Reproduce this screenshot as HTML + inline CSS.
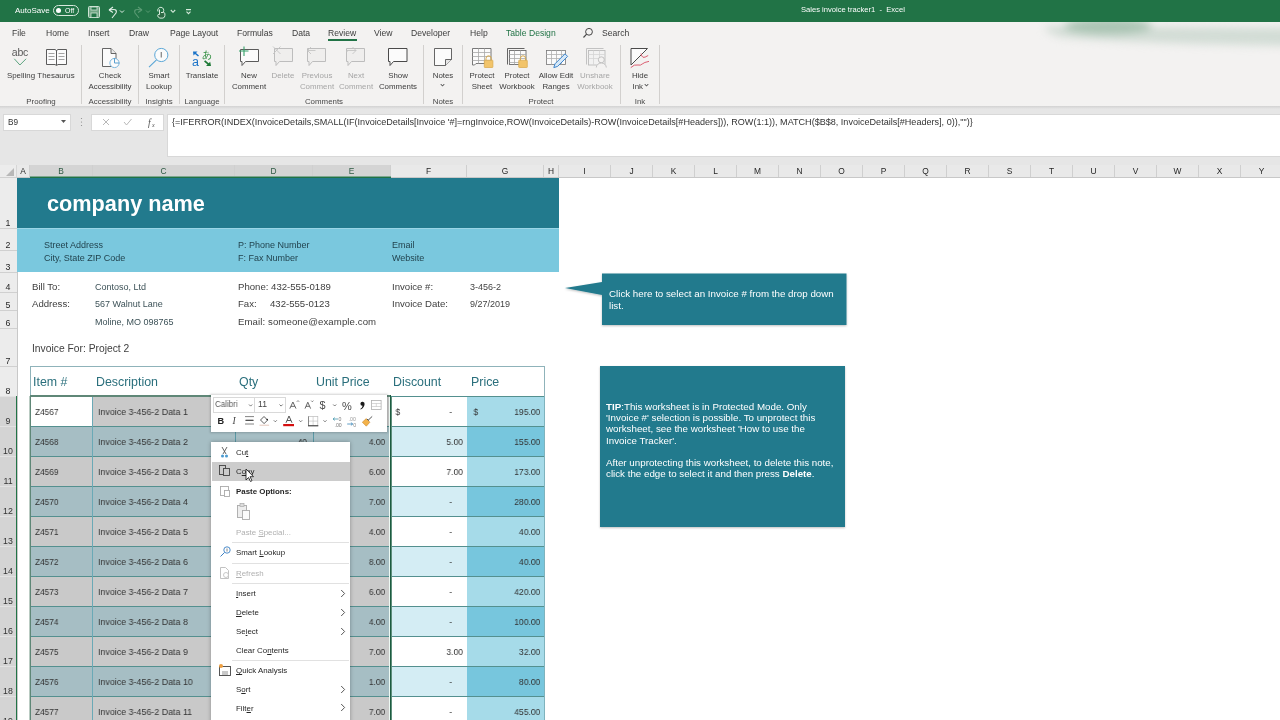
<!DOCTYPE html><html><head><meta charset="utf-8"><style>
*{margin:0;padding:0;box-sizing:border-box}
html,body{width:1280px;height:720px;overflow:hidden;background:#fff;font-family:"Liberation Sans",sans-serif}
body>*{will-change:transform}
.a{position:absolute;white-space:nowrap}
.tab{position:absolute;top:27px;font-size:8.6px;color:#3c3c3c;line-height:12px;white-space:nowrap}
.lbl{position:absolute;font-size:7.9px;color:#3c3c3c;line-height:10.8px;text-align:center;white-space:nowrap}
.dis{color:#a6a6a6}
.grp{position:absolute;top:96px;font-size:7.9px;color:#484848;line-height:11px;text-align:center;white-space:nowrap}
.sep{position:absolute;top:45px;width:1px;height:59px;background:#d2d0ce}
.ch{position:absolute;top:165px;height:12px;background:#e9e9e9;border-right:1px solid #cfcfcf;font-size:8.4px;color:#262626;text-align:center;line-height:13px}
.ch.sel{background:#d4d4d4;color:#2e5a44}
.rh{position:absolute;left:0;width:17px;background:#ececec;border-top:1px solid #d0d0d0;font-size:8.8px;color:#262626;text-align:center}
.rh span{position:absolute;bottom:-1px;left:0;width:16px;line-height:12px}
.rh.sel{background:#d4d4d4;color:#333;border-top-color:#e2e2e2}
.cal{position:absolute;font-size:9px;color:#3d5258;line-height:12px;white-space:nowrap}
.ari{position:absolute;font-size:9.6px;color:#404040;line-height:12px;white-space:nowrap}
.num{position:absolute;font-size:9.5px;color:#333;line-height:12px;text-align:right;white-space:nowrap;transform:scaleX(0.9);transform-origin:100% 50%}
.mi{position:absolute;left:236px;font-size:7.9px;color:#262626;line-height:11px;white-space:nowrap}
.msep{position:absolute;left:232px;width:117px;height:1px;background:#e1e1e1}
.chev{position:absolute;left:340px;width:4px;height:4px;border-right:1px solid #555;border-top:1px solid #555;transform:rotate(45deg)}
</style></head><body>
<div class="a" style="left:0px;top:0px;width:1280px;height:22px;background:#217346"></div>
<div class="a" style="left:15px;top:5px;font-size:8px;color:#fff;line-height:12px">AutoSave</div>
<div class="a" style="left:53px;top:5px;width:26px;height:11px;border:1px solid #d9e8dd;border-radius:6px"></div>
<div class="a" style="left:56px;top:8px;width:5px;height:5px;background:#fff;border-radius:50%"></div>
<div class="a" style="left:65px;top:5px;font-size:7px;color:#fff;line-height:11px">Off</div>
<div class="a" style="left:801px;top:4px;font-size:7.6px;color:#fff;line-height:12px">Sales invoice tracker1&nbsp; - &nbsp;Excel</div>
<svg class="a" style="left:86px;top:3.8px" width="110" height="16" viewBox="0 0 110 16">
<rect x="2.5" y="2.5" width="11" height="11" rx="1" fill="#6fa584" stroke="#cfe3d6" stroke-width="1"/>
<rect x="5" y="3" width="6" height="3" fill="#217346" stroke="#cfe3d6" stroke-width="0.8"/>
<rect x="5" y="9" width="6" height="4.5" fill="#217346" stroke="#cfe3d6" stroke-width="0.8"/>
<path d="M23 6 L27 3 M23 6 L27 8.5 M23 6 Q32 4 30 9 L26 14" fill="none" stroke="#e3efe7" stroke-width="1.1"/>
<path d="M34 6.5 l2 2 l2 -2" fill="none" stroke="#e3efe7" stroke-width="1"/>
<path d="M56 6 L52 3 M56 6 L52 8.5 M56 6 Q47 4 49 9 L53 14" fill="none" stroke="#5a9a73" stroke-width="1.1"/>
<path d="M60 6.5 l2 2 l2 -2" fill="none" stroke="#5a9a73" stroke-width="1"/>
<path d="M72 7.5 a3 3 0 1 1 5.2 0.5" fill="none" stroke="#d5eadb" stroke-width="1"/>
<path d="M73.5 5.5 v5 q-1.8 -0.6 -1.8 1.2 q0 1.6 2.2 2.4 h3 q2 -0.5 2 -2.5 v-1.8 q0 -1.3 -1.5 -1.3 h-2.4" fill="#2d6a45" stroke="#d5eadb" stroke-width="1"/>
<path d="M84.8 6 l2.2 2.3 l2.2 -2.3" fill="none" stroke="#d5eadb" stroke-width="1.1"/>
<path d="M100 5.6 h5 M100.5 7.6 l2 2 l2 -2" fill="none" stroke="#d5eadb" stroke-width="1.1"/>
</svg>
<div class="a" style="left:0px;top:22px;width:1280px;height:85px;background:#f3f2f1"></div>
<div class="a" style="left:1000px;top:22px;width:280px;height:40px;overflow:hidden"><svg style="position:absolute;left:0;top:-10px;filter:blur(4.5px)" width="300" height="60"><path d="M45 14 L300 16 L300 34 L200 32 Q120 30 62 25 Q45 21 45 14 Z" fill="#d2dcd5"/><ellipse cx="108" cy="14" rx="44" ry="8" fill="#aac4b3"/></svg></div>
<div class="tab" style="left:11.5px;top:27px;">File</div>
<div class="tab" style="left:46px;top:27px;">Home</div>
<div class="tab" style="left:88px;top:27px;">Insert</div>
<div class="tab" style="left:129px;top:27px;">Draw</div>
<div class="tab" style="left:169.5px;top:27px;">Page Layout</div>
<div class="tab" style="left:236.5px;top:27px;">Formulas</div>
<div class="tab" style="left:291.5px;top:27px;">Data</div>
<div class="tab" style="left:328px;top:27px;">Review</div>
<div class="tab" style="left:374px;top:27px;">View</div>
<div class="tab" style="left:411px;top:27px;">Developer</div>
<div class="tab" style="left:469.5px;top:27px;">Help</div>
<div class="tab" style="left:506px;top:27px;color:#217346">Table Design</div>
<div class="tab" style="left:601.5px;top:27px;">Search</div>
<div class="a" style="left:328px;top:39px;width:29px;height:2px;background:#217346"></div>
<svg class="a" style="left:582px;top:27px" width="12" height="12"><circle cx="7" cy="4.8" r="3.4" fill="none" stroke="#444" stroke-width="1"/><path d="M4.6 7.2 L1.5 10.5" stroke="#444" stroke-width="1.1"/></svg>
<div class="lbl" style="left:-9.5px;width:60px;top:70.6px">Spelling</div>
<div class="lbl" style="left:26.0px;width:60px;top:70.6px">Thesaurus</div>
<div class="grp" style="left:10.5px;width:60px;top:96px">Proofing</div>
<div class="sep" style="left:81px"></div>
<div class="lbl" style="left:80.0px;width:60px;top:70.6px">Check<br>Accessibility</div>
<div class="grp" style="left:80.0px;width:60px;top:96px">Accessibility</div>
<div class="sep" style="left:138px"></div>
<div class="lbl" style="left:128.5px;width:60px;top:70.6px">Smart<br>Lookup</div>
<div class="grp" style="left:128.5px;width:60px;top:96px">Insights</div>
<div class="sep" style="left:179px"></div>
<div class="lbl" style="left:171.5px;width:60px;top:70.6px">Translate</div>
<div class="grp" style="left:171.5px;width:60px;top:96px">Language</div>
<div class="sep" style="left:224px"></div>
<div class="lbl" style="left:219.0px;width:60px;top:70.6px">New<br>Comment</div>
<div class="lbl dis" style="left:253.0px;width:60px;top:70.6px">Delete</div>
<div class="lbl dis" style="left:287.0px;width:60px;top:70.6px">Previous<br>Comment</div>
<div class="lbl dis" style="left:326.0px;width:60px;top:70.6px">Next<br>Comment</div>
<div class="lbl" style="left:367.5px;width:60px;top:70.6px">Show<br>Comments</div>
<div class="grp" style="left:294.0px;width:60px;top:96px">Comments</div>
<div class="sep" style="left:423px"></div>
<div class="lbl" style="left:413.0px;width:60px;top:70.6px">Notes</div>
<div class="grp" style="left:412.5px;width:60px;top:96px">Notes</div>
<div class="a" style="left:441px;top:83px;width:3px;height:3px;border-right:1px solid #555;border-bottom:1px solid #555;transform:rotate(45deg)"></div>
<div class="sep" style="left:462px"></div>
<div class="lbl" style="left:452.0px;width:60px;top:70.6px">Protect<br>Sheet</div>
<div class="lbl" style="left:486.5px;width:60px;top:70.6px">Protect<br>Workbook</div>
<div class="lbl" style="left:525.5px;width:60px;top:70.6px">Allow Edit<br>Ranges</div>
<div class="lbl dis" style="left:565.0px;width:60px;top:70.6px">Unshare<br>Workbook</div>
<div class="grp" style="left:511.0px;width:60px;top:96px">Protect</div>
<div class="sep" style="left:620px"></div>
<div class="lbl" style="left:609.5px;width:60px;top:70.6px">Hide<br>Ink&nbsp;&nbsp;</div>
<div class="grp" style="left:609.5px;width:60px;top:96px">Ink</div>
<div class="a" style="left:645px;top:83px;width:3px;height:3px;border-right:1px solid #555;border-bottom:1px solid #555;transform:rotate(45deg)"></div>
<div class="sep" style="left:659px"></div>
<svg class="a" style="left:0;top:40px" width="680" height="32" viewBox="0 40 680 32">
<!-- spelling -->
<text x="11.8" y="56" font-family="Liberation Sans" font-size="10.5" fill="#5a5a5a" textLength="16.4">abc</text>
<path d="M14.3 58.8 l5.6 6.2 l6.2 -6.2" fill="none" stroke="#4a9a72" stroke-width="0.9"/>
<!-- thesaurus -->
<path d="M46.5 49.5 h8.5 l1.5 1 l1.5 -1 h8.5 v15 h-8.5 l-1.5 1 l-1.5 -1 h-8.5 z" fill="#fbfbfb" stroke="#4a4a4a" stroke-width="0.9"/>
<path d="M56.5 50.5 v14.5" stroke="#4a4a4a" stroke-width="0.9"/>
<path d="M48.5 53.5 h6 M48.5 56.5 h6 M48.5 59.5 h6 M58.5 53.5 h6 M58.5 56.5 h6 M58.5 59.5 h6" stroke="#9a9a9a" stroke-width="0.9"/>
<!-- check accessibility -->
<path d="M102.5 48.5 h8.5 l5 5 v13 h-13.5 z" fill="#fbfbfb" stroke="#555" stroke-width="0.9"/>
<path d="M111 48.5 v5 h5" fill="#e8e8e8" stroke="#555" stroke-width="0.9"/>
<circle cx="114.5" cy="63" r="4.6" fill="#fbfbfb" stroke="#7bb6dc" stroke-width="1"/>
<path d="M114.5 58 v5 h5" fill="none" stroke="#5aa0d0" stroke-width="1"/>
<!-- smart lookup -->
<circle cx="161.3" cy="55" r="6.6" fill="#fbfbfb" stroke="#5aa6d6" stroke-width="1"/>
<path d="M156.5 59.8 L149 67.2" stroke="#5aa6d6" stroke-width="1.1"/>
<path d="M161.3 52 v5.5" stroke="#8a8a8a" stroke-width="1.3"/>
<!-- translate -->
<path d="M193 51.5 h4.5 l-1.5 1.5 l3 2.5 l-1 1 l-3 -2.5 l-1.5 1.5 z" fill="#1a73c8"/>
<text x="192" y="66.3" font-family="Liberation Sans" font-size="12.5" fill="#1a73c8">a</text>
<text x="201.5" y="57.5" font-family="Liberation Sans" font-size="10" fill="#2a8a3a">&#12354;</text>
<path d="M211 66 h-5 l1.5 -1.5 l-3.5 -3 l1.2 -1.2 l3.5 3 l1.5 -1.5 z" fill="#1f7a38"/>
<!-- new comment -->
<path d="M240.5 49.5 h18 v12 h-13 l-3.5 4 v-4 h-1.5 z" fill="#fbfbfb" stroke="#5a5a5a" stroke-width="1"/>
<path d="M244 46.5 v9.5 M239 51 h9.5" stroke="#35a26a" stroke-width="1.1"/>
<!-- delete comment -->
<path d="M274.5 48.5 h18 v13 h-13 l-3.5 4 v-4 h-1.5 z" fill="#efeeed" stroke="#bdbdbd" stroke-width="1"/>
<path d="M273 46.5 l7.5 7.5 M280.5 46.5 l-7.5 7.5" stroke="#c4c4c4" stroke-width="0.9"/>
<!-- previous -->
<path d="M307.5 48.5 h18 v13 h-13 l-3.5 4 v-4 h-1.5 z" fill="#efeeed" stroke="#bdbdbd" stroke-width="1"/>
<path d="M311 47 l-3.5 3.5 l3.5 3.5 M307.5 50.5 h8" fill="none" stroke="#c4c4c4" stroke-width="0.9"/>
<!-- next -->
<path d="M346.5 48.5 h18 v13 h-13 l-3.5 4 v-4 h-1.5 z" fill="#efeeed" stroke="#bdbdbd" stroke-width="1"/>
<path d="M352.5 47 l3.5 3.5 l-3.5 3.5 M347 52 v-1.5 h9" fill="none" stroke="#c4c4c4" stroke-width="0.9"/>
<!-- show comments -->
<path d="M388.5 48.5 h18.5 v13 h-13.5 l-3.5 4 v-4 h-1.5 z" fill="#fbfbfb" stroke="#4a4a4a" stroke-width="1"/>
<!-- notes -->
<path d="M434.5 48.5 h17 v11 l-6 6 h-11 z" fill="#fbfbfb" stroke="#555" stroke-width="0.9"/>
<path d="M451.5 59.5 h-6 v6" fill="#e6e6e6" stroke="#555" stroke-width="0.9"/>
<!-- protect sheet -->
<path d="M472.5 48.5 h18.5 v15 h-15 l-1.5 1.5 h-2 z" fill="#fbfbfb" stroke="#6a6a6a" stroke-width="0.9"/>
<path d="M472.5 52.5 h18.5 M472.5 56.5 h18.5 M472.5 60.5 h18.5 M478.5 48.5 v15 M484.5 48.5 v15" stroke="#a8a8a8" stroke-width="0.8"/>
<rect x="484.3" y="60.2" width="8.6" height="7.3" rx="0.6" fill="#f2c46a" stroke="#d8a848" stroke-width="0.7"/>
<path d="M486 60.2 v-1.8 a2.6 2.6 0 0 1 5.2 0 v1.8" fill="none" stroke="#d8a848" stroke-width="1"/>
<!-- protect workbook -->
<path d="M507.5 64.5 v-16 h17" fill="none" stroke="#555" stroke-width="0.9"/>
<rect x="509.5" y="50.5" width="16.5" height="14" fill="#fbfbfb" stroke="#6a6a6a" stroke-width="0.9"/>
<path d="M509.5 54.5 h16.5 M509.5 58.5 h16.5 M509.5 62.5 h16.5 M514.5 50.5 v14 M520.5 50.5 v14" stroke="#a8a8a8" stroke-width="0.8"/>
<rect x="518.7" y="60.2" width="8.6" height="7.3" rx="0.6" fill="#f2c46a" stroke="#d8a848" stroke-width="0.7"/>
<path d="M520.4 60.2 v-1.8 a2.6 2.6 0 0 1 5.2 0 v1.8" fill="none" stroke="#d8a848" stroke-width="1"/>
<!-- allow edit ranges -->
<rect x="546.5" y="50.5" width="19" height="14" fill="#fbfbfb" stroke="#777" stroke-width="0.8"/>
<path d="M546.5 54.5 h19 M546.5 58.5 h19 M551.5 50.5 v14 M556.5 50.5 v14 M561.5 50.5 v14" stroke="#b0b0b0" stroke-width="0.8"/>
<path d="M553.8 67.6 l1.2 -3.8 l10 -10 l2.6 2.6 l-10 10 z" fill="#d6e8f7" stroke="#3b84cc" stroke-width="1"/>
<!-- unshare workbook -->
<path d="M586.5 64.5 v-16 h17" fill="none" stroke="#bcbcbc" stroke-width="0.9"/>
<rect x="588.5" y="50.5" width="16.5" height="14.5" fill="#f2f2f2" stroke="#bcbcbc" stroke-width="0.9"/>
<path d="M588.5 54.5 h16.5 M588.5 58.5 h16.5 M593.5 50.5 v14.5 M599.5 50.5 v14.5" stroke="#d4d4d4" stroke-width="0.8"/>
<circle cx="601.3" cy="59.8" r="3" fill="#f3f2f1" stroke="#bcbcbc" stroke-width="0.9"/>
<path d="M596.3 67.5 a5 4.5 0 0 1 10 0" fill="#f3f2f1" stroke="#bcbcbc" stroke-width="0.9"/>
<!-- hide ink -->
<path d="M631 48.5 h16.5 l-16.5 16.5 z" fill="#fbfbfb" stroke="#4a4a4a" stroke-width="1"/>
<path d="M641 53.5 q0.5 3 2 3.8 q1.5 0.6 5.2 -1.8 M630.8 67.6 q3.5 -3.6 7.2 -2.6 q2.6 0.7 4.2 -1 q2 -1.8 6.8 -2.6" fill="none" stroke="#d9566a" stroke-width="0.95"/>
</svg>
<div class="a" style="left:0px;top:107px;width:1280px;height:58px;background:#e6e6e6"></div>
<div class="a" style="left:0px;top:106px;width:1280px;height:3px;background:linear-gradient(#d2d2d2,#e6e6e6)"></div>
<div class="a" style="left:3px;top:114px;width:68px;height:17px;background:#fff;border:1px solid #d8d8d8"></div>
<div class="a" style="left:8px;top:117.3px;font-size:8.2px;color:#333;line-height:11px">B9</div>
<svg class="a" style="left:61px;top:120px" width="6" height="4"><path d="M0 0 h5 l-2.5 3 z" fill="#555"/></svg>
<svg class="a" style="left:80px;top:117px" width="3" height="12"><circle cx="1.5" cy="1.5" r="0.6" fill="#888"/><circle cx="1.5" cy="5" r="0.6" fill="#888"/><circle cx="1.5" cy="8.5" r="0.6" fill="#888"/></svg>
<div class="a" style="left:91px;top:114px;width:73px;height:17px;background:#fff;border:1px solid #d8d8d8"></div>
<svg class="a" style="left:95px;top:116px" width="68" height="14">
<path d="M8 3 l6 6 M14 3 l-6 6" stroke="#b8b8b8" stroke-width="1"/>
<path d="M29 6 l2.5 3 l5 -6" fill="none" stroke="#b8b8b8" stroke-width="1"/>
<text x="53" y="10" font-family="Liberation Serif" font-style="italic" font-size="9.5" fill="#555">f</text><text x="57" y="11" font-family="Liberation Serif" font-style="italic" font-size="6" fill="#555">x</text>
</svg>
<div class="a" style="left:167px;top:114px;width:1113px;height:43px;background:#fff;border:1px solid #d8d8d8;border-right:none"></div>
<div class="a" style="left:172px;top:116.5px;font-size:9.07px;color:#333;line-height:11px">{=IFERROR(INDEX(InvoiceDetails,SMALL(IF(InvoiceDetails[Invoice '#]=rngInvoice,ROW(InvoiceDetails)-ROW(InvoiceDetails[#Headers])), ROW(1:1)), MATCH($B$8, InvoiceDetails[#Headers], 0)),"")}</div>
<div class="a" style="left:0px;top:165px;width:17px;height:12px;background:#ececec;border-right:1px solid #d6d6d6"></div>
<svg class="a" style="left:5px;top:167px" width="10" height="10"><path d="M9 1 V9 H1 z" fill="#b8b8b8"/></svg>
<div class="ch" style="left:17px;width:13px">A</div>
<div class="ch sel" style="left:30px;width:63px">B</div>
<div class="ch sel" style="left:93px;width:142px">C</div>
<div class="ch sel" style="left:235px;width:78px">D</div>
<div class="ch sel" style="left:313px;width:78px">E</div>
<div class="ch" style="left:391px;width:76px">F</div>
<div class="ch" style="left:467px;width:77px">G</div>
<div class="ch" style="left:544px;width:15px">H</div>
<div class="ch" style="left:559px;width:52px">I</div>
<div class="ch" style="left:611px;width:42px">J</div>
<div class="ch" style="left:653px;width:42px">K</div>
<div class="ch" style="left:695px;width:42px">L</div>
<div class="ch" style="left:737px;width:42px">M</div>
<div class="ch" style="left:779px;width:42px">N</div>
<div class="ch" style="left:821px;width:42px">O</div>
<div class="ch" style="left:863px;width:42px">P</div>
<div class="ch" style="left:905px;width:42px">Q</div>
<div class="ch" style="left:947px;width:42px">R</div>
<div class="ch" style="left:989px;width:42px">S</div>
<div class="ch" style="left:1031px;width:42px">T</div>
<div class="ch" style="left:1073px;width:42px">U</div>
<div class="ch" style="left:1115px;width:42px">V</div>
<div class="ch" style="left:1157px;width:42px">W</div>
<div class="ch" style="left:1199px;width:42px">X</div>
<div class="ch" style="left:1241px;width:42px">Y</div>
<div class="a" style="left:0px;top:177px;width:1280px;height:1px;background:#c8c8c8"></div>
<div class="a" style="left:30px;top:176px;width:361px;height:1px;background:#7fa891"></div>
<div class="a" style="left:30px;top:177px;width:361px;height:1px;background:#217346"></div>
<div class="rh" style="top:177px;height:51px"><span>1</span></div>
<div class="rh" style="top:228px;height:22px"><span>2</span></div>
<div class="rh" style="top:250px;height:22px"><span>3</span></div>
<div class="rh" style="top:272px;height:20px"><span>4</span></div>
<div class="rh" style="top:292px;height:18px"><span>5</span></div>
<div class="rh" style="top:310px;height:18px"><span>6</span></div>
<div class="rh" style="top:328px;height:38px"><span>7</span></div>
<div class="rh" style="top:366px;height:30px"><span>8</span></div>
<div class="rh sel" style="top:396px;height:30px"><span>9</span></div>
<div class="rh sel" style="top:426px;height:30px"><span>10</span></div>
<div class="rh sel" style="top:456px;height:30px"><span>11</span></div>
<div class="rh sel" style="top:486px;height:30px"><span>12</span></div>
<div class="rh sel" style="top:516px;height:30px"><span>13</span></div>
<div class="rh sel" style="top:546px;height:30px"><span>14</span></div>
<div class="rh sel" style="top:576px;height:30px"><span>15</span></div>
<div class="rh sel" style="top:606px;height:30px"><span>16</span></div>
<div class="rh sel" style="top:636px;height:30px"><span>17</span></div>
<div class="rh sel" style="top:666px;height:30px"><span>18</span></div>
<div class="rh sel" style="top:696px;height:30px"><span>19</span></div>
<div class="a" style="left:17px;top:177px;width:1px;height:543px;background:#c8c8c8"></div>
<div class="a" style="left:16px;top:396px;width:1px;height:324px;background:#217346"></div>
<div class="a" style="left:17px;top:178px;width:542px;height:50px;background:#227a8d"></div>
<div class="a" style="left:17px;top:228px;width:542px;height:1px;background:#9ad6e6"></div>
<div class="a" style="left:17px;top:229px;width:542px;height:43px;background:#7ac8de"></div>
<div class="a" style="left:46.5px;top:191.2px;font-size:21.7px;font-weight:bold;color:#fff;line-height:26px">company name</div>
<div class="cal" style="left:43.7px;top:238.5px;color:#1f3f4a">Street Address</div>
<div class="cal" style="left:43.7px;top:252px;color:#1f3f4a">City, State ZIP Code</div>
<div class="cal" style="left:237.5px;top:238.5px;color:#1f3f4a">P: Phone Number</div>
<div class="cal" style="left:237.5px;top:252px;color:#1f3f4a">F: Fax Number</div>
<div class="cal" style="left:392.2px;top:238.5px;color:#1f3f4a">Email</div>
<div class="cal" style="left:392.2px;top:252px;color:#1f3f4a">Website</div>
<div class="ari" style="left:32.4px;top:281px">Bill To:</div>
<div class="ari" style="left:32.4px;top:298px">Address:</div>
<div class="ari" style="left:237.5px;top:280.5px">Phone: 432-555-0189</div>
<div class="ari" style="left:237.5px;top:298px">Fax:</div>
<div class="ari" style="left:269.8px;top:298px">432-555-0123</div>
<div class="ari" style="left:237.5px;top:315.5px"><span style="letter-spacing:0.1px">Email: someone@example.com</span></div>
<div class="ari" style="left:392.2px;top:281px">Invoice #:</div>
<div class="ari" style="left:392.2px;top:298px">Invoice Date:</div>
<div class="cal" style="left:94.8px;top:281px">Contoso, Ltd</div>
<div class="cal" style="left:94.8px;top:298px">567 Walnut Lane</div>
<div class="cal" style="left:94.8px;top:315.5px">Moline, MO 098765</div>
<div class="cal" style="left:469.5px;top:281px;color:#444">3-456-2</div>
<div class="cal" style="left:469.5px;top:298px;color:#444">9/27/2019</div>
<div class="ari" style="left:32.4px;top:342.5px;font-size:10.3px">Invoice For: Project 2</div>
<div class="a" style="left:30px;top:366px;width:515px;height:31px;border:1px solid #8fb3ba;border-bottom:none;background:#fff"></div>
<div class="a" style="left:33.3px;top:375px;font-size:12.4px;color:#2a6f7c;line-height:15px">Item #</div>
<div class="a" style="left:96.1px;top:375px;font-size:12.4px;color:#2a6f7c;line-height:15px">Description</div>
<div class="a" style="left:239px;top:375px;font-size:12.4px;color:#2a6f7c;line-height:15px">Qty</div>
<div class="a" style="left:315.8px;top:375px;font-size:12.4px;color:#2a6f7c;line-height:15px">Unit Price</div>
<div class="a" style="left:393.4px;top:375px;font-size:12.4px;color:#2a6f7c;line-height:15px">Discount</div>
<div class="a" style="left:470.6px;top:375px;font-size:12.4px;color:#2a6f7c;line-height:15px">Price</div>
<div class="a" style="left:31px;top:396px;width:360px;height:30px;background:#c9c9c9"></div>
<div class="a" style="left:391px;top:396px;width:76px;height:30px;background:#ffffff"></div>
<div class="a" style="left:467px;top:396px;width:78px;height:30px;background:#a6dbe9"></div>
<div class="a" style="left:31px;top:396px;width:62px;height:30px;background:#fff"></div>
<div class="a" style="left:30px;top:396px;width:515px;height:1px;background:#54908f"></div>
<div class="cal" style="left:35.4px;top:405.5px;color:#333;font-size:9.3px;transform:scaleX(0.89);transform-origin:0 50%">Z4567</div>
<div class="cal" style="left:97.5px;top:405.5px;color:#333;font-size:9.3px;transform:scaleX(0.955);transform-origin:0 50%">Invoice 3-456-2 Data 1</div>
<div class="num" style="left:240px;width:67px;top:406px"></div>
<div class="num" style="left:320px;width:65.4px;top:406px">5.00</div>
<div class="num" style="left:395px;top:406px">$</div>
<div class="num" style="left:449px;top:406px">-</div>
<div class="num" style="left:473px;top:406px">$</div>
<div class="num" style="left:480px;width:60.4px;top:406px">195.00</div>
<div class="a" style="left:31px;top:426px;width:360px;height:30px;background:#a6bec4"></div>
<div class="a" style="left:391px;top:426px;width:76px;height:30px;background:#d4edf4"></div>
<div class="a" style="left:467px;top:426px;width:78px;height:30px;background:#77c6dd"></div>
<div class="a" style="left:30px;top:426px;width:515px;height:1px;background:#54908f"></div>
<div class="cal" style="left:35.4px;top:435.5px;color:#333;font-size:9.3px;transform:scaleX(0.89);transform-origin:0 50%">Z4568</div>
<div class="cal" style="left:97.5px;top:435.5px;color:#333;font-size:9.3px;transform:scaleX(0.955);transform-origin:0 50%">Invoice 3-456-2 Data 2</div>
<div class="num" style="left:240px;width:67px;top:436px">40</div>
<div class="num" style="left:320px;width:65.4px;top:436px">4.00</div>
<div class="num" style="left:400px;width:63px;top:436px">5.00</div>
<div class="num" style="left:480px;width:60.4px;top:436px">155.00</div>
<div class="a" style="left:31px;top:456px;width:360px;height:30px;background:#c9c9c9"></div>
<div class="a" style="left:391px;top:456px;width:76px;height:30px;background:#ffffff"></div>
<div class="a" style="left:467px;top:456px;width:78px;height:30px;background:#a6dbe9"></div>
<div class="a" style="left:30px;top:456px;width:515px;height:1px;background:#54908f"></div>
<div class="cal" style="left:35.4px;top:465.5px;color:#333;font-size:9.3px;transform:scaleX(0.89);transform-origin:0 50%">Z4569</div>
<div class="cal" style="left:97.5px;top:465.5px;color:#333;font-size:9.3px;transform:scaleX(0.955);transform-origin:0 50%">Invoice 3-456-2 Data 3</div>
<div class="num" style="left:240px;width:67px;top:466px">30</div>
<div class="num" style="left:320px;width:65.4px;top:466px">6.00</div>
<div class="num" style="left:400px;width:63px;top:466px">7.00</div>
<div class="num" style="left:480px;width:60.4px;top:466px">173.00</div>
<div class="a" style="left:31px;top:486px;width:360px;height:30px;background:#a6bec4"></div>
<div class="a" style="left:391px;top:486px;width:76px;height:30px;background:#d4edf4"></div>
<div class="a" style="left:467px;top:486px;width:78px;height:30px;background:#77c6dd"></div>
<div class="a" style="left:30px;top:486px;width:515px;height:1px;background:#54908f"></div>
<div class="cal" style="left:35.4px;top:495.5px;color:#333;font-size:9.3px;transform:scaleX(0.89);transform-origin:0 50%">Z4570</div>
<div class="cal" style="left:97.5px;top:495.5px;color:#333;font-size:9.3px;transform:scaleX(0.955);transform-origin:0 50%">Invoice 3-456-2 Data 4</div>
<div class="num" style="left:240px;width:67px;top:496px">40</div>
<div class="num" style="left:320px;width:65.4px;top:496px">7.00</div>
<div class="num" style="left:449px;top:496px">-</div>
<div class="num" style="left:480px;width:60.4px;top:496px">280.00</div>
<div class="a" style="left:31px;top:516px;width:360px;height:30px;background:#c9c9c9"></div>
<div class="a" style="left:391px;top:516px;width:76px;height:30px;background:#ffffff"></div>
<div class="a" style="left:467px;top:516px;width:78px;height:30px;background:#a6dbe9"></div>
<div class="a" style="left:30px;top:516px;width:515px;height:1px;background:#54908f"></div>
<div class="cal" style="left:35.4px;top:525.5px;color:#333;font-size:9.3px;transform:scaleX(0.89);transform-origin:0 50%">Z4571</div>
<div class="cal" style="left:97.5px;top:525.5px;color:#333;font-size:9.3px;transform:scaleX(0.955);transform-origin:0 50%">Invoice 3-456-2 Data 5</div>
<div class="num" style="left:240px;width:67px;top:526px">10</div>
<div class="num" style="left:320px;width:65.4px;top:526px">4.00</div>
<div class="num" style="left:449px;top:526px">-</div>
<div class="num" style="left:480px;width:60.4px;top:526px">40.00</div>
<div class="a" style="left:31px;top:546px;width:360px;height:30px;background:#a6bec4"></div>
<div class="a" style="left:391px;top:546px;width:76px;height:30px;background:#d4edf4"></div>
<div class="a" style="left:467px;top:546px;width:78px;height:30px;background:#77c6dd"></div>
<div class="a" style="left:30px;top:546px;width:515px;height:1px;background:#54908f"></div>
<div class="cal" style="left:35.4px;top:555.5px;color:#333;font-size:9.3px;transform:scaleX(0.89);transform-origin:0 50%">Z4572</div>
<div class="cal" style="left:97.5px;top:555.5px;color:#333;font-size:9.3px;transform:scaleX(0.955);transform-origin:0 50%">Invoice 3-456-2 Data 6</div>
<div class="num" style="left:240px;width:67px;top:556px">5</div>
<div class="num" style="left:320px;width:65.4px;top:556px">8.00</div>
<div class="num" style="left:449px;top:556px">-</div>
<div class="num" style="left:480px;width:60.4px;top:556px">40.00</div>
<div class="a" style="left:31px;top:576px;width:360px;height:30px;background:#c9c9c9"></div>
<div class="a" style="left:391px;top:576px;width:76px;height:30px;background:#ffffff"></div>
<div class="a" style="left:467px;top:576px;width:78px;height:30px;background:#a6dbe9"></div>
<div class="a" style="left:30px;top:576px;width:515px;height:1px;background:#54908f"></div>
<div class="cal" style="left:35.4px;top:585.5px;color:#333;font-size:9.3px;transform:scaleX(0.89);transform-origin:0 50%">Z4573</div>
<div class="cal" style="left:97.5px;top:585.5px;color:#333;font-size:9.3px;transform:scaleX(0.955);transform-origin:0 50%">Invoice 3-456-2 Data 7</div>
<div class="num" style="left:240px;width:67px;top:586px">70</div>
<div class="num" style="left:320px;width:65.4px;top:586px">6.00</div>
<div class="num" style="left:449px;top:586px">-</div>
<div class="num" style="left:480px;width:60.4px;top:586px">420.00</div>
<div class="a" style="left:31px;top:606px;width:360px;height:30px;background:#a6bec4"></div>
<div class="a" style="left:391px;top:606px;width:76px;height:30px;background:#d4edf4"></div>
<div class="a" style="left:467px;top:606px;width:78px;height:30px;background:#77c6dd"></div>
<div class="a" style="left:30px;top:606px;width:515px;height:1px;background:#54908f"></div>
<div class="cal" style="left:35.4px;top:615.5px;color:#333;font-size:9.3px;transform:scaleX(0.89);transform-origin:0 50%">Z4574</div>
<div class="cal" style="left:97.5px;top:615.5px;color:#333;font-size:9.3px;transform:scaleX(0.955);transform-origin:0 50%">Invoice 3-456-2 Data 8</div>
<div class="num" style="left:240px;width:67px;top:616px">25</div>
<div class="num" style="left:320px;width:65.4px;top:616px">4.00</div>
<div class="num" style="left:449px;top:616px">-</div>
<div class="num" style="left:480px;width:60.4px;top:616px">100.00</div>
<div class="a" style="left:31px;top:636px;width:360px;height:30px;background:#c9c9c9"></div>
<div class="a" style="left:391px;top:636px;width:76px;height:30px;background:#ffffff"></div>
<div class="a" style="left:467px;top:636px;width:78px;height:30px;background:#a6dbe9"></div>
<div class="a" style="left:30px;top:636px;width:515px;height:1px;background:#54908f"></div>
<div class="cal" style="left:35.4px;top:645.5px;color:#333;font-size:9.3px;transform:scaleX(0.89);transform-origin:0 50%">Z4575</div>
<div class="cal" style="left:97.5px;top:645.5px;color:#333;font-size:9.3px;transform:scaleX(0.955);transform-origin:0 50%">Invoice 3-456-2 Data 9</div>
<div class="num" style="left:240px;width:67px;top:646px">5</div>
<div class="num" style="left:320px;width:65.4px;top:646px">7.00</div>
<div class="num" style="left:400px;width:63px;top:646px">3.00</div>
<div class="num" style="left:480px;width:60.4px;top:646px">32.00</div>
<div class="a" style="left:31px;top:666px;width:360px;height:30px;background:#a6bec4"></div>
<div class="a" style="left:391px;top:666px;width:76px;height:30px;background:#d4edf4"></div>
<div class="a" style="left:467px;top:666px;width:78px;height:30px;background:#77c6dd"></div>
<div class="a" style="left:30px;top:666px;width:515px;height:1px;background:#54908f"></div>
<div class="cal" style="left:35.4px;top:675.5px;color:#333;font-size:9.3px;transform:scaleX(0.89);transform-origin:0 50%">Z4576</div>
<div class="cal" style="left:97.5px;top:675.5px;color:#333;font-size:9.3px;transform:scaleX(0.955);transform-origin:0 50%">Invoice 3-456-2 Data 10</div>
<div class="num" style="left:240px;width:67px;top:676px">80</div>
<div class="num" style="left:320px;width:65.4px;top:676px">1.00</div>
<div class="num" style="left:449px;top:676px">-</div>
<div class="num" style="left:480px;width:60.4px;top:676px">80.00</div>
<div class="a" style="left:31px;top:696px;width:360px;height:30px;background:#c9c9c9"></div>
<div class="a" style="left:391px;top:696px;width:76px;height:30px;background:#ffffff"></div>
<div class="a" style="left:467px;top:696px;width:78px;height:30px;background:#a6dbe9"></div>
<div class="a" style="left:30px;top:696px;width:515px;height:1px;background:#54908f"></div>
<div class="cal" style="left:35.4px;top:705.5px;color:#333;font-size:9.3px;transform:scaleX(0.89);transform-origin:0 50%">Z4577</div>
<div class="cal" style="left:97.5px;top:705.5px;color:#333;font-size:9.3px;transform:scaleX(0.955);transform-origin:0 50%">Invoice 3-456-2 Data 11</div>
<div class="num" style="left:240px;width:67px;top:706px">65</div>
<div class="num" style="left:320px;width:65.4px;top:706px">7.00</div>
<div class="num" style="left:449px;top:706px">-</div>
<div class="num" style="left:480px;width:60.4px;top:706px">455.00</div>
<div class="a" style="left:92px;top:396px;width:1px;height:324px;background:#6aa9b6"></div>
<div class="a" style="left:235px;top:396px;width:1px;height:324px;background:#5b98a4"></div>
<div class="a" style="left:313px;top:396px;width:1px;height:324px;background:#5b98a4"></div>
<div class="a" style="left:544px;top:396px;width:1px;height:324px;background:#7fb3bd"></div>
<div class="a" style="left:30px;top:395px;width:361px;height:2px;background:#5f8777"></div>
<div class="a" style="left:29px;top:396px;width:1px;height:324px;background:#b9cbc2"></div>
<div class="a" style="left:30px;top:396px;width:1px;height:324px;background:#5f8777"></div>
<div class="a" style="left:389px;top:397px;width:1px;height:323px;background:#eefaf4"></div>
<div class="a" style="left:390px;top:395px;width:1px;height:325px;background:#1d5c40"></div>
<div class="a" style="left:391px;top:397px;width:1px;height:323px;background:#5f8f7c"></div>
<svg class="a" style="left:560px;top:270px" width="300" height="62"><defs><filter id="sh" x="-10%" y="-10%" width="120%" height="140%"><feDropShadow dx="0" dy="1" stdDeviation="1" flood-color="#000" flood-opacity="0.25"/></filter></defs><path d="M42 3.5 H286.5 V55 H42 V25 L5 18 L42 12 Z" fill="#227a8d" filter="url(#sh)"/></svg>
<div class="a" style="left:608.5px;top:288px;font-size:9.78px;color:#fff;line-height:11.6px">Click here to select an Invoice # from the drop down<br>list.</div>
<div class="a" style="left:600px;top:365.5px;width:244.5px;height:161px;background:#227a8d;box-shadow:0 1px 2px rgba(0,0,0,0.25)"></div>
<div class="a" style="left:606.25px;top:401px;font-size:9.78px;color:#fff;line-height:11.2px"><b>TIP</b>:This worksheet is in Protected Mode. Only<br>'Invoice #' selection is possible. To unprotect this<br>worksheet, see the worksheet 'How to use the<br>Invoice Tracker'.<br><br>After unprotecting this worksheet, to delete this note,<br>click the edge to select it and then press <b>Delete</b>.</div>
<div class="a" style="left:210.5px;top:395px;width:175.5px;height:36.5px;background:#fff;box-shadow:0 0 2px 1px rgba(0,0,0,0.18)"></div>
<div class="a" style="left:213px;top:397.4px;width:42px;height:16px;border:1px solid #d9d9d9"></div>
<div class="a" style="left:255px;top:397.4px;width:30.7px;height:16px;border:1px solid #d9d9d9;border-left:none"></div>
<div class="a" style="left:214.9px;top:399.3px;font-size:8.6px;color:#5a5a5a;line-height:11px;transform:scaleX(0.93);transform-origin:0 50%">Calibri</div>
<div class="a" style="left:257.6px;top:399.3px;font-size:8.6px;color:#444;line-height:11px">11</div>
<svg class="a" style="left:210px;top:395px" width="176" height="37" viewBox="210 395 176 37">
<path d="M249 404.5 l1.6 1.6 l1.6 -1.6 M279.5 404.5 l1.6 1.6 l1.6 -1.6" fill="none" stroke="#555" stroke-width="0.8"/>
<path d="M289.8 408.6 l3.1 -6.6 l3.1 6.6 M290.9 406.3 h4" fill="none" stroke="#555" stroke-width="0.9"/><path d="M296.8 401.8 l1.2 -1.2 l1.2 1.2" fill="none" stroke="#555" stroke-width="0.7"/>
<path d="M305 408.6 l2.8 -6.4 l2.8 6.4 M306 406.3 h3.6" fill="none" stroke="#555" stroke-width="0.9"/><path d="M311.2 400.6 l1.1 1.2 l1.1 -1.2" fill="none" stroke="#555" stroke-width="0.7"/>
<text x="319.6" y="409" font-family="Liberation Sans" font-size="10.8" fill="#4a4a4a" textLength="5.8">$</text>
<path d="M333.2 404.5 l1.5 1.5 l1.5 -1.5" fill="none" stroke="#555" stroke-width="0.8"/>
<text x="342" y="409.6" font-family="Liberation Sans" font-size="11" fill="#4a4a4a" textLength="10.2">%</text>
<path d="M360.4 403.6 a2.1 2.1 0 1 1 4.2 0.4 q-0.1 3.4 -3.9 5.6 l-0.4 -0.6 q2.2 -1.5 2.3 -3.2 a2.1 2.1 0 0 1 -2.2 -2.2 z" fill="#1a1a1a"/>
<rect x="371.5" y="400.5" width="9.6" height="9" fill="none" stroke="#b0b0b0" stroke-width="0.8"/><path d="M371.5 403.5 h9.6 M371.5 406.5 h9.6 M376.3 403.5 v3" stroke="#c0c0c0" stroke-width="0.6"/>
<text x="217.6" y="424.2" font-family="Liberation Sans" font-weight="bold" font-size="9.2" fill="#222">B</text>
<text x="232.5" y="424.2" font-family="Liberation Serif" font-style="italic" font-size="9.5" fill="#444">I</text>
<path d="M245 416.6 h9 M245 420.3 h9 M245 424 h9" stroke="#777" stroke-width="0.9"/><path d="M246 420.3 h7" stroke="#333" stroke-width="0.9"/>
<path d="M260.5 420 l3.5 -3.5 l3.6 3.6 l-3.5 3.5 z" fill="#fff" stroke="#333" stroke-width="0.8"/><circle cx="267.2" cy="419.6" r="0.8" fill="#222"/>
<rect x="259.5" y="424.6" width="9.6" height="1.4" fill="#ecd8d0"/>
<path d="M273.8 420.3 l1.5 1.5 l1.5 -1.5 M299.2 420.3 l1.5 1.5 l1.5 -1.5 M323.5 420.3 l1.5 1.5 l1.5 -1.5" fill="none" stroke="#555" stroke-width="0.8"/>
<path d="M286 422.8 l3 -6.8 l3 6.8 M287.1 420.5 h3.8" fill="none" stroke="#444" stroke-width="0.9"/><rect x="283.2" y="424" width="10.8" height="2.2" fill="#d40f0f"/>
<rect x="308.5" y="416.5" width="9.3" height="9.3" fill="none" stroke="#bbb" stroke-width="0.7"/><path d="M313.1 416.5 v9.3 M308.5 421.1 h9.3" stroke="#bbb" stroke-width="0.6"/><path d="M308 425.8 h10.3" stroke="#333" stroke-width="1"/><path d="M308.5 416.5 v9.3" stroke="#555" stroke-width="0.6"/>
<path d="M333 419 h5 M333 419 l1.8 -1.4 M333 419 l1.8 1.4" fill="none" stroke="#4a9ab0" stroke-width="0.8"/><text x="338.6" y="421.2" font-family="Liberation Sans" font-size="5.2" fill="#777">0</text><text x="334.5" y="426.6" font-family="Liberation Sans" font-size="5.2" fill="#777">.00</text>
<text x="348.6" y="421.2" font-family="Liberation Sans" font-size="5.2" fill="#999">.00</text><path d="M347.2 424 h5.5 M352.7 424 l-1.8 -1.4 M352.7 424 l-1.8 1.4" fill="none" stroke="#3a86b8" stroke-width="0.8"/><text x="353.2" y="426.6" font-family="Liberation Sans" font-size="5.2" fill="#888">0</text>
<path d="M362.3 422.2 l4 -3.6 l3.6 3.6 l-3.6 4 z" fill="#f3b24a" stroke="#c98a30" stroke-width="0.6"/><path d="M368 420.4 l4.2 -4 M367 419 l1.5 1.5" stroke="#555" stroke-width="1"/>
</svg>
<div class="a" style="left:211px;top:442px;width:139px;height:290px;background:#fff;box-shadow:0 0 4px rgba(0,0,0,0.3)"></div>
<div class="a" style="left:211.5px;top:462px;width:137.5px;height:18.5px;background:#cccccc"></div>
<div class="mi" style="top:446.8px;">Cu<u>t</u></div>
<div class="mi" style="top:465.8px;">C<u>o</u>py</div>
<div class="mi" style="top:485.5px;"><b>Paste Options:</b></div>
<div class="mi" style="top:526.5px;color:#b0b0b0">Paste <u>S</u>pecial...</div>
<div class="mi" style="top:547px;">Smart <u>L</u>ookup</div>
<div class="mi" style="top:567.5px;color:#b0b0b0"><u>R</u>efresh</div>
<div class="mi" style="top:588px;"><u>I</u>nsert</div>
<div class="mi" style="top:607px;"><u>D</u>elete</div>
<div class="mi" style="top:626px;">Se<u>l</u>ect</div>
<div class="mi" style="top:644.5px;">Clear Co<u>n</u>tents</div>
<div class="mi" style="top:665px;"><u>Q</u>uick Analysis</div>
<div class="mi" style="top:684px;">S<u>o</u>rt</div>
<div class="mi" style="top:702.5px;">Filt<u>e</u>r</div>
<div class="a" style="left:232px;top:542px;width:117px;height:1px;background:#e1e1e1"></div>
<div class="a" style="left:232px;top:563px;width:117px;height:1px;background:#e1e1e1"></div>
<div class="a" style="left:232px;top:583px;width:117px;height:1px;background:#e1e1e1"></div>
<div class="a" style="left:232px;top:659.5px;width:117px;height:1px;background:#e1e1e1"></div>
<svg class="a" style="left:340px;top:589.0px" width="8" height="9"><path d="M1.2 1 L4.6 4.5 L1.2 8" fill="none" stroke="#444" stroke-width="0.9"/></svg>
<svg class="a" style="left:340px;top:608.0px" width="8" height="9"><path d="M1.2 1 L4.6 4.5 L1.2 8" fill="none" stroke="#444" stroke-width="0.9"/></svg>
<svg class="a" style="left:340px;top:627.0px" width="8" height="9"><path d="M1.2 1 L4.6 4.5 L1.2 8" fill="none" stroke="#444" stroke-width="0.9"/></svg>
<svg class="a" style="left:340px;top:684.5px" width="8" height="9"><path d="M1.2 1 L4.6 4.5 L1.2 8" fill="none" stroke="#444" stroke-width="0.9"/></svg>
<svg class="a" style="left:340px;top:703.0px" width="8" height="9"><path d="M1.2 1 L4.6 4.5 L1.2 8" fill="none" stroke="#444" stroke-width="0.9"/></svg>
<svg class="a" style="left:210px;top:442px" width="140" height="278" viewBox="210 442 140 278">
<!-- cut -->
<path d="M222 447 l4 7 M227 447 l-4 7" stroke="#555" stroke-width="0.9"/><circle cx="222.5" cy="456" r="1.5" fill="#4a9ad0"/><circle cx="226.5" cy="456" r="1.5" fill="#4a9ad0"/>
<!-- copy -->
<rect x="219.5" y="465.5" width="6" height="9" fill="none" stroke="#444" stroke-width="0.9"/><rect x="223.5" y="468.5" width="6" height="7" fill="#ccc" stroke="#444" stroke-width="0.9"/>
<!-- paste options icon -->
<rect x="220.5" y="486.5" width="8" height="9" fill="none" stroke="#aaa" stroke-width="0.9"/><rect x="224.5" y="490.5" width="5" height="6" fill="#fff" stroke="#aaa" stroke-width="0.9"/>
<rect x="237.5" y="505.5" width="9" height="12" fill="#eee" stroke="#aaa" stroke-width="0.9"/><rect x="242.5" y="510.5" width="7" height="9" fill="#fafafa" stroke="#aaa" stroke-width="0.9"/><rect x="240" y="503.5" width="4" height="3" fill="#ddd" stroke="#aaa" stroke-width="0.7"/>
<!-- smart lookup -->
<circle cx="227" cy="550" r="3.2" fill="none" stroke="#3b80c4" stroke-width="0.9"/><path d="M224.5 552.5 l-4 4" stroke="#3b80c4" stroke-width="1"/><path d="M227 548.5 v3" stroke="#666" stroke-width="0.8"/>
<!-- refresh -->
<path d="M220.5 567.5 h5 l3 3 v8 h-8 z" fill="none" stroke="#bbb" stroke-width="0.9"/><circle cx="226" cy="575" r="2.5" fill="#fff" stroke="#bbb" stroke-width="0.8"/>
<!-- quick analysis -->
<rect x="219.5" y="666.5" width="11" height="9" fill="#fff" stroke="#444" stroke-width="0.9"/><path d="M222 672 h6 M222 674 h6" stroke="#666" stroke-width="0.7"/><circle cx="221" cy="666" r="2" fill="#f0a040"/>
<!-- cursor -->
<path d="M246 469 v11 l2.5 -2.5 l2 4 l1.5 -0.8 l-2 -4 h3.5 z" fill="#fff" stroke="#111" stroke-width="0.8"/>
</svg>
</body></html>
